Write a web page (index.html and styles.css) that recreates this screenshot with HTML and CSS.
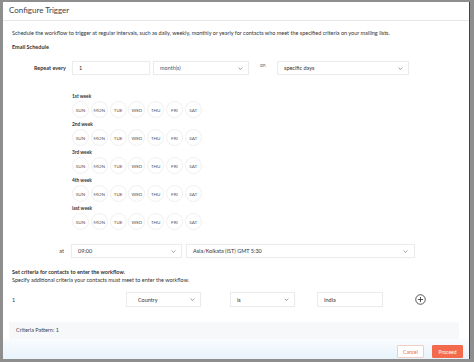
FILE: index.html
```html
<!DOCTYPE html>
<html lang="en">
<head>
    <meta charset="UTF-8">
    <meta name="viewport" content="width=device-width, initial-scale=1.0">
    <title>Configure Trigger</title>
    <link rel="stylesheet" href="styles.css">
</head>
<body>
    <div class="dialog">
        <div class="dialog-head">Configure Trigger</div>

        <div class="dialog-body">
            <p class="intro">Schedule the workflow to trigger at regular intervals, such as daily, weekly, monthly or yearly for contacts who meet the specified criteria on your mailing lists.</p>
            <div class="section-title">Email Schedule</div>

            <div class="row repeat-row">
                <label class="row-label">Repeat every</label>
                <div class="field field-num">1</div>
                <div class="select select-unit">month(s)
                    <svg class="chev" viewBox="0 0 8 5"><path d="M1 1l3 3 3-3"/></svg>
                </div>
                <span class="on-label">on</span>
                <div class="select select-on">specific days
                    <svg class="chev" viewBox="0 0 8 5"><path d="M1 1l3 3 3-3"/></svg>
                </div>
            </div>

            <div class="weeks">
                <div class="week">
                    <div class="week-name">1st week</div>
                    <div class="days">
                        <span class="day">SUN</span><span class="day">MON</span><span class="day">TUE</span><span class="day">WED</span><span class="day">THU</span><span class="day">FRI</span><span class="day">SAT</span>
                    </div>
                </div>
                <div class="week">
                    <div class="week-name">2nd week</div>
                    <div class="days">
                        <span class="day">SUN</span><span class="day">MON</span><span class="day">TUE</span><span class="day">WED</span><span class="day">THU</span><span class="day">FRI</span><span class="day">SAT</span>
                    </div>
                </div>
                <div class="week">
                    <div class="week-name">3rd week</div>
                    <div class="days">
                        <span class="day">SUN</span><span class="day">MON</span><span class="day">TUE</span><span class="day">WED</span><span class="day">THU</span><span class="day">FRI</span><span class="day">SAT</span>
                    </div>
                </div>
                <div class="week">
                    <div class="week-name">4th week</div>
                    <div class="days">
                        <span class="day">SUN</span><span class="day">MON</span><span class="day">TUE</span><span class="day">WED</span><span class="day">THU</span><span class="day">FRI</span><span class="day">SAT</span>
                    </div>
                </div>
                <div class="week">
                    <div class="week-name">last week</div>
                    <div class="days">
                        <span class="day">SUN</span><span class="day">MON</span><span class="day">TUE</span><span class="day">WED</span><span class="day">THU</span><span class="day">FRI</span><span class="day">SAT</span>
                    </div>
                </div>
            </div>

            <div class="row at-row">
                <label class="row-label">at</label>
                <div class="select select-time">09:00
                    <svg class="chev" viewBox="0 0 8 5"><path d="M1 1l3 3 3-3"/></svg>
                </div>
                <div class="select select-tz">Asia/Kolkata (IST) GMT 5:30
                    <svg class="chev" viewBox="0 0 8 5"><path d="M1 1l3 3 3-3"/></svg>
                </div>
            </div>

            <div class="criteria-head">
                <div class="criteria-title">Set criteria for contacts to enter the workflow.</div>
                <div class="criteria-sub">Specify additional criteria your contacts must meet to enter the workflow.</div>
            </div>

            <div class="criteria-row">
                <span class="crit-num">1</span>
                <div class="select select-field">Country
                    <svg class="chev" viewBox="0 0 8 5"><path d="M1 1l3 3 3-3"/></svg>
                </div>
                <div class="select select-op">is
                    <svg class="chev" viewBox="0 0 8 5"><path d="M1 1l3 3 3-3"/></svg>
                </div>
                <div class="field field-value">India</div>
                <svg class="add-btn" viewBox="0 0 12 12">
                    <circle cx="6" cy="6" r="5.2"/>
                    <path d="M6 3.2v5.6M3.2 6h5.6"/>
                </svg>
            </div>

            <div class="pattern">Criteria Pattern: 1</div>
        </div>

        <div class="dialog-foot">
            <button class="btn btn-cancel">Cancel</button>
            <button class="btn btn-proceed">Proceed</button>
        </div>
    </div>
</body>
</html>
```

FILE: styles.css
```css
html, body {
    height: 100%;
}
body {
    margin: 0;
    background-color: #8e8e8e;
    font-family: Lato, "Open Sans", sans-serif;
    color: #333;
    padding: 2px 4px 3px 3px;
    box-sizing: border-box;
}
.dialog {
    background-color: #fff;
    height: 357px;
    display: flex;
    flex-direction: column;
    border-right: 1px solid #444;
}
.dialog-head {
    height: 18px;
    line-height: 17px;
    padding-left: 6px;
    font-size: 8px;
    color: #444;
    border-bottom: 1px solid #e6e6e6;
}
.dialog-body {
    flex: 1;
    padding: 8px 10px 0 9px;
}
.intro {
    margin: 0;
    font-size: 5.5px;
    line-height: 9px;
    color: #333;
}
.section-title {
    margin-top: 5px;
    font-size: 5.5px;
    line-height: 9px;
    font-weight: bold;
}
.row {
    display: flex;
    align-items: center;
    height: 14px;
}
.repeat-row {
    margin-top: 9px;
}
.row-label {
    width: 54px;
    margin-right: 6px;
    text-align: right;
    font-size: 5.5px;
    font-weight: bold;
}
.field,
.select {
    height: 14px;
    box-sizing: border-box;
    border: 1px solid #ececec;
    box-shadow: 0 0 1px rgba(0, 0, 0, 0.06);
    font-size: 5.5px;
    color: #333;
    display: flex;
    align-items: center;
    padding-left: 6px;
}
.select {
    justify-content: space-between;
    padding-right: 5px;
}
.chev {
    width: 5px;
    height: 3px;
    fill: none;
    stroke: #555;
    stroke-width: 1;
}
.field-num {
    width: 78px;
}
.select-unit {
    width: 96px;
    margin-left: 3px;
    color: #555;
}
.on-label {
    font-size: 5px;
    line-height: 6px;
    color: #666;
    width: 8px;
    margin: 1px 9px 0 11px;
    align-self: flex-start;
}
.select-on {
    width: 132px;
}
.weeks {
    margin: 17px 0 0 60px;
}
.week {
    height: 28px;
}
.week-name {
    font-size: 4.8px;
    line-height: 8px;
    font-weight: bold;
    color: #333;
}
.days {
    display: flex;
    gap: 1.8px;
    margin-top: 1px;
}
.day {
    width: 17px;
    height: 17px;
    box-sizing: border-box;
    border: 1px solid #f0f0f0;
    border-radius: 50%;
    display: flex;
    align-items: center;
    justify-content: center;
    font-size: 4.6px;
    color: #555;
}
.at-row {
    margin-top: 12px;
}
.at-row .row-label {
    width: 52px;
    margin-right: 7px;
    font-weight: normal;
    color: #444;
}
.select-time {
    width: 111px;
}
.select-tz {
    width: 229px;
    margin-left: 4px;
    padding-right: 6px;
}
.criteria-head {
    margin-top: 11px;
}
.criteria-title {
    font-size: 5.5px;
    line-height: 7px;
    font-weight: bold;
}
.criteria-sub {
    font-size: 5.5px;
    line-height: 8px;
    color: #333;
}
.criteria-row {
    margin-top: 8px;
    height: 15px;
    display: flex;
    align-items: center;
}
.criteria-row .select,
.criteria-row .field {
    height: 15px;
}
.crit-num {
    width: 114px;
    font-size: 5.5px;
}
.select-field {
    width: 75px;
    padding-left: 11px;
}
.select-op {
    width: 65px;
    margin-left: 29px;
}
.field-value {
    width: 66px;
    margin-left: 22px;
}
.add-btn {
    width: 11px;
    height: 11px;
    margin-left: 32px;
    fill: none;
    stroke: #333;
    stroke-width: 0.9;
}
.pattern {
    margin: 15px 0 0 -3px;
    height: 17px;
    line-height: 17px;
    padding-left: 7px;
    background-color: #f7f8fa;
    font-size: 5.5px;
    color: #444;
}
.dialog-foot {
    height: 20px;
    box-sizing: border-box;
    padding: 6px 6px 0 0;
    display: flex;
    justify-content: flex-end;
    align-items: flex-start;
    gap: 8px;
    background: linear-gradient(#fafcfe, #e8f3fb);
}
.btn {
    height: 13px;
    font-family: Lato, sans-serif;
    font-size: 5px;
    padding: 0;
    border-radius: 1px;
    cursor: pointer;
}
.btn-cancel {
    width: 27px;
    background-color: #fff;
    border: 1px solid #f3cdc3;
    color: #e56a50;
}
.btn-proceed {
    width: 31px;
    background-color: #f36a4c;
    border: 1px solid #f36a4c;
    color: #fff;
}
```
